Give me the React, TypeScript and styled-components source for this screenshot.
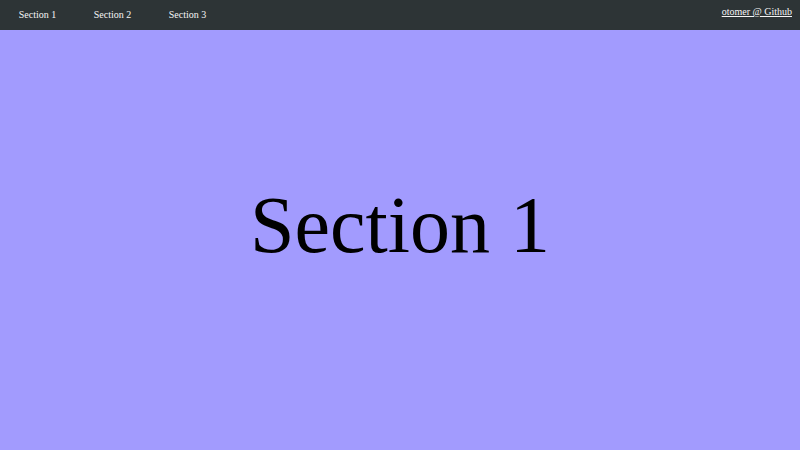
import styled, { createGlobalStyle } from 'styled-components'

const SECTIONS = ['Section 1', 'Section 2', 'Section 3']

export default function App() {
  return (
    <>
      <GlobalStyle />
      <Nav>
        <NavList>
          {SECTIONS.map((s) => (
            <NavItem key={s} href="#">{s}</NavItem>
          ))}
        </NavList>
        <GithubLink href="#">otomer @ Github</GithubLink>
      </Nav>
      <Section>
        <Title>Section 1</Title>
      </Section>
    </>
  )
}

const GlobalStyle = createGlobalStyle`
  html, body {
    margin: 0;
    padding: 0;
    background: #a29bfe;
    font-family: "Liberation Serif", "Times New Roman", serif;
  }
`

const Nav = styled.nav`
  position: fixed;
  top: 0;
  left: 0;
  right: 0;
  height: 30px;
  display: flex;
  justify-content: space-between;
  background: #2d3436;
  z-index: 1;
`

const NavList = styled.div`
  display: flex;
  align-items: center;
`

const NavItem = styled.a`
  padding: 0 18.75px;
  font-size: 10px;
  color: #f5f5f5;
  text-decoration: none;
  line-height: 30px;
`

const GithubLink = styled.a`
  align-self: flex-start;
  margin: 6px 8px 0 0;
  font-size: 10px;
  color: #f5f5f5;
  text-decoration: underline;
`

const Section = styled.section`
  height: 450px;
  display: flex;
  align-items: center;
  justify-content: center;
`

const Title = styled.h1`
  margin: 0;
  font-size: 80px;
  font-weight: 400;
  color: #000000;
`
